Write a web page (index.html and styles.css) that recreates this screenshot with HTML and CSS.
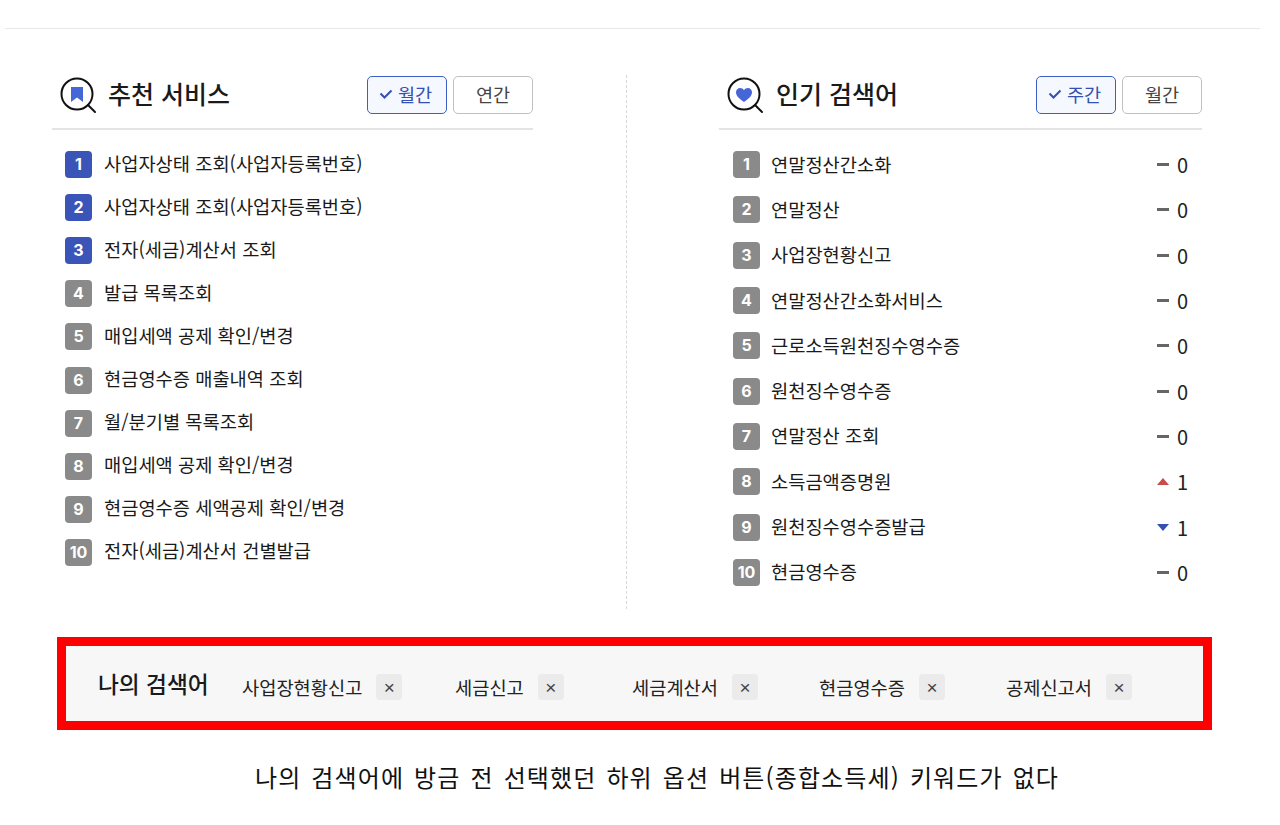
FILE: index.html
```html
<!DOCTYPE html>
<html lang="ko">
<head>
<meta charset="utf-8">
<title>검색어</title>
<link rel="stylesheet" href="styles.css">
</head>
<body>
<hr class="top-rule">
<main class="panels">
  <section class="panel panel-left">
    <header class="panel-head">
      <svg class="head-icon" viewBox="0 0 38 38" width="38" height="38" aria-hidden="true">
        <circle cx="17" cy="17" r="15.5" fill="none" stroke="#111" stroke-width="2"/>
        <path d="M28 28l7 7" stroke="#111" stroke-width="2" stroke-linecap="round"/>
        <path d="M11 10h12v15l-6-4.5-6 4.5z" fill="#4566d6"/>
      </svg>
      <h2 class="panel-title">추천 서비스</h2>
      <div class="toggle">
        <button class="toggle-btn active"><svg class="check" viewBox="0 0 14 10" width="14" height="10" aria-hidden="true"><path d="M1.5 4.5l4 4 7-7" fill="none" stroke="#3451b2" stroke-width="2"/></svg>월간</button>
        <button class="toggle-btn">연간</button>
      </div>
    </header>
    <ol class="rank-list service">
      <li class="rank-row"><span class="badge blue">1</span><span class="label">사업자상태 조회(사업자등록번호)</span></li>
      <li class="rank-row"><span class="badge blue">2</span><span class="label">사업자상태 조회(사업자등록번호)</span></li>
      <li class="rank-row"><span class="badge blue">3</span><span class="label">전자(세금)계산서 조회</span></li>
      <li class="rank-row"><span class="badge">4</span><span class="label">발급 목록조회</span></li>
      <li class="rank-row"><span class="badge">5</span><span class="label">매입세액 공제 확인/변경</span></li>
      <li class="rank-row"><span class="badge">6</span><span class="label">현금영수증 매출내역 조회</span></li>
      <li class="rank-row"><span class="badge">7</span><span class="label">월/분기별 목록조회</span></li>
      <li class="rank-row"><span class="badge">8</span><span class="label">매입세액 공제 확인/변경</span></li>
      <li class="rank-row"><span class="badge">9</span><span class="label">현금영수증 세액공제 확인/변경</span></li>
      <li class="rank-row"><span class="badge">10</span><span class="label">전자(세금)계산서 건별발급</span></li>
    </ol>
  </section>
  <section class="panel panel-right">
    <header class="panel-head">
      <svg class="head-icon" viewBox="0 0 38 38" width="38" height="38" aria-hidden="true">
        <circle cx="17" cy="17" r="15.5" fill="none" stroke="#111" stroke-width="2"/>
        <path d="M28 28l7 7" stroke="#111" stroke-width="2" stroke-linecap="round"/>
        <path d="M17 25c-5-3.5-8-6.300-8-9.800 0-2.500 1.900-4.200 4.100-4.200 1.600 0 3 .8 3.900 2.200.9-1.400 2.300-2.200 3.900-2.200 2.200 0 4.100 1.700 4.100 4.200 0 3.500-3 6.300-8 9.800z" fill="#4566d6"/>
      </svg>
      <h2 class="panel-title">인기 검색어</h2>
      <div class="toggle">
        <button class="toggle-btn active"><svg class="check" viewBox="0 0 14 10" width="14" height="10" aria-hidden="true"><path d="M1.500 4.500l4 4 7-7" fill="none" stroke="#3451b2" stroke-width="2"/></svg>주간</button>
        <button class="toggle-btn">월간</button>
      </div>
    </header>
    <ol class="rank-list popular">
      <li class="rank-row"><span class="badge">1</span><span class="label">연말정산간소화</span><span class="trend"><i class="same"></i>0</span></li>
      <li class="rank-row"><span class="badge">2</span><span class="label">연말정산</span><span class="trend"><i class="same"></i>0</span></li>
      <li class="rank-row"><span class="badge">3</span><span class="label">사업장현황신고</span><span class="trend"><i class="same"></i>0</span></li>
      <li class="rank-row"><span class="badge">4</span><span class="label">연말정산간소화서비스</span><span class="trend"><i class="same"></i>0</span></li>
      <li class="rank-row"><span class="badge">5</span><span class="label">근로소득원천징수영수증</span><span class="trend"><i class="same"></i>0</span></li>
      <li class="rank-row"><span class="badge">6</span><span class="label">원천징수영수증</span><span class="trend"><i class="same"></i>0</span></li>
      <li class="rank-row"><span class="badge">7</span><span class="label">연말정산 조회</span><span class="trend"><i class="same"></i>0</span></li>
      <li class="rank-row"><span class="badge">8</span><span class="label">소득금액증명원</span><span class="trend"><i class="up"></i>1</span></li>
      <li class="rank-row"><span class="badge">9</span><span class="label">원천징수영수증발급</span><span class="trend"><i class="down"></i>1</span></li>
      <li class="rank-row"><span class="badge">10</span><span class="label">현금영수증</span><span class="trend"><i class="same"></i>0</span></li>
    </ol>
  </section>
</main>
<section class="my-search">
  <h3 class="my-title">나의 검색어</h3>
  <ul class="tags">
    <li class="tag"><span>사업장현황신고</span><button class="tag-x">×</button></li>
    <li class="tag"><span>세금신고</span><button class="tag-x">×</button></li>
    <li class="tag"><span>세금계산서</span><button class="tag-x">×</button></li>
    <li class="tag"><span>현금영수증</span><button class="tag-x">×</button></li>
    <li class="tag"><span>공제신고서</span><button class="tag-x">×</button></li>
  </ul>
</section>
<p class="caption">나의 검색어에 방금 전 선택했던 하위 옵션 버튼(종합소득세) 키워드가 없다</p>
</body>
</html>
```
FILE: styles.css
```css
* { box-sizing: border-box; }
html, body { margin: 0; padding: 0; }
body {
  width: 1280px;
  height: 825px;
  overflow: hidden;
  background: #fff;
  color: #1a1a1a;
  font-family: "Noto Sans CJK KR", "Noto Sans", sans-serif;
}
.top-rule {
  margin: 28px 0 0 5px;
  width: 1255px;
  height: 1px;
  border: 0;
  background: #e8e8e8;
}
.panels {
  display: flex;
  margin: 46px 0 0 52px;
  height: 534px;
}
.panel-left {
  width: 575px;
  padding-right: 93px;
  border-right: 1px dashed #d8d8d8;
}
.panel-right {
  width: 575px;
  padding-left: 92px;
}
.panel-head {
  display: flex;
  align-items: flex-start;
  height: 55px;
  padding-left: 8px;
  border-bottom: 2px solid #e4e4e4;
}
.head-icon { flex: none; margin-top: 2px; }
.panel-title {
  margin: 0 0 0 10px;
  font-size: 25px;
  font-weight: 500;
  line-height: 36px;
  color: #1a1a1a;
}
.panel-right .panel-title { margin-left: 11px; }
.toggle { display: flex; gap: 6px; margin: 1px 0 0 auto; }
.toggle-btn {
  display: flex;
  align-items: center;
  justify-content: center;
  width: 80px;
  height: 38px;
  padding: 0 0 3px;
  border: 1px solid #c0c0c0;
  border-radius: 5px;
  background: #fff;
  color: #444;
  font-family: inherit;
  font-size: 18.6px;
}
.toggle-btn.active {
  padding-right: 3px;
  border-color: #3d5fc4;
  background: #f5f8fe;
  color: #3451b2;
}
.check { margin: 1px 5px 0 0; }
.rank-list {
  margin: 0;
  padding: 0;
  list-style: none;
}
.service { padding: 13px 0 0 13px; }
.popular { padding: 12px 14px 0 14px; }
.rank-row { display: flex; align-items: center; }
.service .rank-row { height: 43.1px; }
.popular .rank-row { height: 45.3px; }
.badge {
  flex: none;
  width: 27px;
  height: 27px;
  margin-right: 12px;
  border-radius: 4px;
  background: #8a8a8a;
  color: #fff;
  font-family: "Inter", sans-serif;
  font-size: 16px;
  font-weight: 700;
  line-height: 27px;
  text-align: center;
}
.badge.blue { background: #3a54b8; }
.popular .badge { margin-right: 11px; }
.label {
  padding-bottom: 5px;
  font-size: 18.7px;
  color: #1a1a1a;
  white-space: nowrap;
}
.popular .label { padding-bottom: 3px; }
.trend {
  display: flex;
  align-items: center;
  margin-left: auto;
  font-size: 20px;
  color: #222;
}
.trend i { display: block; width: 12px; margin-right: 8px; }
.same { height: 3px; background: #666; }
.up { height: 0; border: 6px solid transparent; border-top: 0; border-bottom: 7px solid #c94b4b; }
.down { height: 0; border: 6px solid transparent; border-bottom: 0; border-top: 7px solid #3451b2; }
.my-search {
  display: flex;
  align-items: center;
  width: 1155px;
  height: 93px;
  margin: 28px 0 0 57px;
  padding-left: 32px;
  border: 9px solid #f00;
  background: #f7f7f7;
}
.my-title {
  width: 144px;
  margin: 0;
  font-size: 22.7px;
  font-weight: 500;
  color: #1a1a1a;
}
.tags {
  display: grid;
  grid-template-columns: 213px 177px 187px 187px auto;
  margin: 6px 0 0;
  padding: 0;
  list-style: none;
}
.tag {
  display: flex;
  align-items: center;
  gap: 14px;
  font-size: 18.7px;
  color: #222;
}
.tag-x {
  width: 26px;
  height: 26px;
  padding: 2px 0 0;
  border: 0;
  border-radius: 4px;
  background: #ebebeb;
  color: #444;
  font-family: "Liberation Sans", sans-serif;
  font-size: 19px;
  line-height: 24px;
}
.caption {
  margin: 30px 0 0;
  padding-left: 34px;
  text-align: center;
  font-size: 24px;
  letter-spacing: 1.1px;
  word-spacing: 2.2px;
  line-height: 34px;
  color: #111;
}
```
